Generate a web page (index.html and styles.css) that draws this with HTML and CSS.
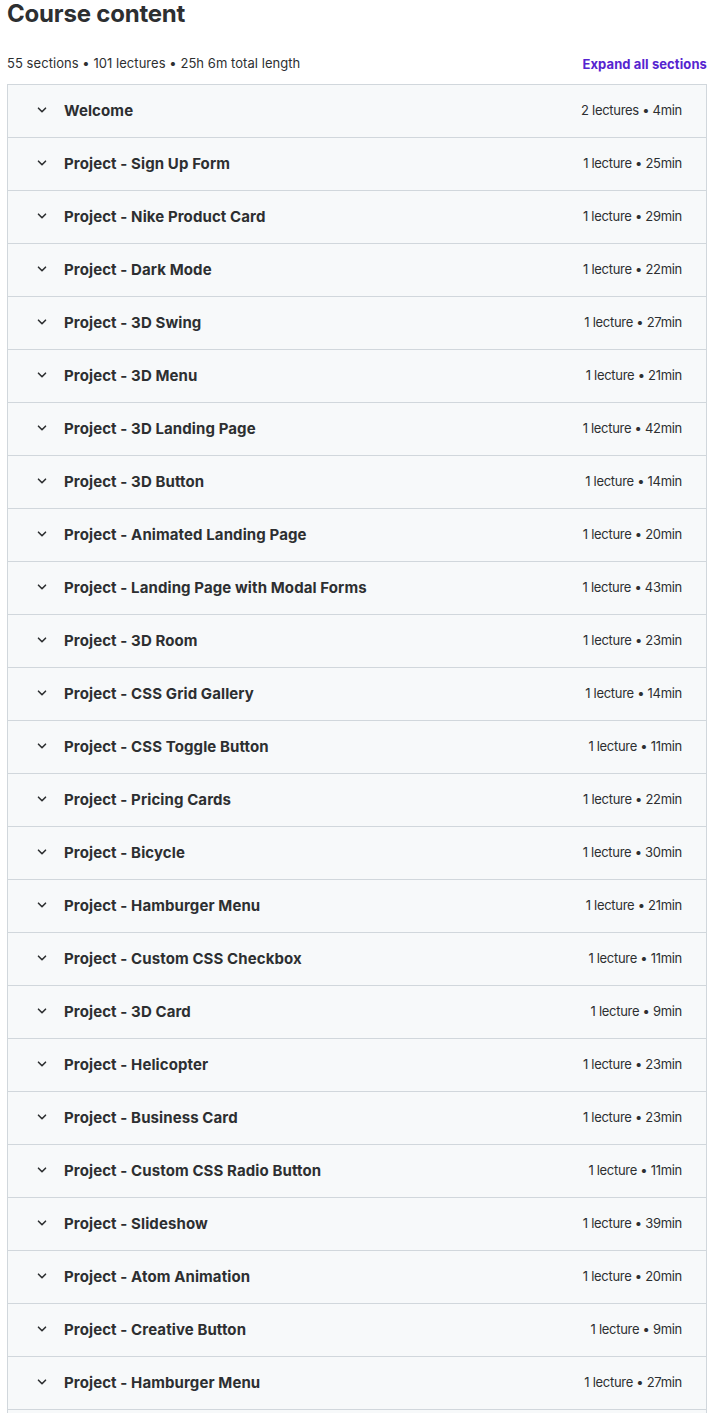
FILE: index.html
```html
<!DOCTYPE html>
<html>
<head>
<meta charset="utf-8">
<link rel="stylesheet" href="styles.css">
</head>
<body>
<div class="page">
  <h2 class="title">Course content</h2>
  <div class="meta-row">
    <span class="meta">55 sections • 101 lectures • 25h 6m total length</span>
    <button class="expand">Expand all sections</button>
  </div>
  <div class="sections" id="sections"></div>
</div>
<script src="script.js"></script>
</body>
</html>
```

FILE: script.js
```js
const data = [
  ["Welcome","2 lectures • 4min"],
  ["Project - Sign Up Form","1 lecture • 25min"],
  ["Project - Nike Product Card","1 lecture • 29min"],
  ["Project - Dark Mode","1 lecture • 22min"],
  ["Project - 3D Swing","1 lecture • 27min"],
  ["Project - 3D Menu","1 lecture • 21min"],
  ["Project - 3D Landing Page","1 lecture • 42min"],
  ["Project - 3D Button","1 lecture • 14min"],
  ["Project - Animated Landing Page","1 lecture • 20min"],
  ["Project - Landing Page with Modal Forms","1 lecture • 43min"],
  ["Project - 3D Room","1 lecture • 23min"],
  ["Project - CSS Grid Gallery","1 lecture • 14min"],
  ["Project - CSS Toggle Button","1 lecture • 11min"],
  ["Project - Pricing Cards","1 lecture • 22min"],
  ["Project - Bicycle","1 lecture • 30min"],
  ["Project - Hamburger Menu","1 lecture • 21min"],
  ["Project - Custom CSS Checkbox","1 lecture • 11min"],
  ["Project - 3D Card","1 lecture • 9min"],
  ["Project - Helicopter","1 lecture • 23min"],
  ["Project - Business Card","1 lecture • 23min"],
  ["Project - Custom CSS Radio Button","1 lecture • 11min"],
  ["Project - Slideshow","1 lecture • 39min"],
  ["Project - Atom Animation","1 lecture • 20min"],
  ["Project - Creative Button","1 lecture • 9min"],
  ["Project - Hamburger Menu","1 lecture • 27min"],
  ["Project - Product Card","1 lecture • 18min"]
];
const wrap = document.getElementById("sections");
const chev = '<svg class="chev" width="12" height="12" viewBox="0 0 12 12"><path d="M2.5 4.2 L6 7.7 L9.5 4.2" fill="none" stroke="#2d2f31" stroke-width="1.6" stroke-linecap="round" stroke-linejoin="round"/></svg>';
for (const [t, m] of data) {
  const row = document.createElement("div");
  row.className = "row";
  row.innerHTML = chev + '<span class="row-title"></span><span class="row-meta"></span>';
  row.querySelector(".row-title").textContent = t;
  row.querySelector(".row-meta").textContent = m;
  wrap.appendChild(row);
}
```

FILE: styles.css
```css
html, body { margin: 0; padding: 0; background: #fff; }
body { font-family: "Inter", "Noto Sans", sans-serif; color: #2d2f31; }
.page { padding: 0 6px 0 7px; }
.title {
  margin: 0;
  font-size: 24px;
  line-height: 28px;
  font-weight: 700;
  color: #2d2f31;
  letter-spacing: -0.2px;
}
.meta-row {
  display: flex;
  justify-content: space-between;
  align-items: center;
  margin-top: 24px;
  height: 22px;
  margin-bottom: 10px;
}
.meta { font-size: 13px; color: #2d2f31; letter-spacing: 0.05px; }
.expand {
  border: 0; background: none; padding: 0; margin-top: 2px;
  font-family: inherit; font-size: 13px; font-weight: 700; color: #5624d0;
  letter-spacing: 0.1px;
}
.sections {
  border: 1px solid #d1d7dc;
  border-top: 0;
  width: 698px;
}
.row {
  display: flex;
  align-items: center;
  border-top: 1px solid #d1d7dc;
  background: #f7f9fa;
  padding: 0 24px 2px 28px;
  box-sizing: border-box;
  height: 53px;
}
.chev { flex: none; margin-right: 16px; }
.row-title { font-size: 15px; font-weight: 700; flex: 1; color: #2d2f31; letter-spacing: 0.1px; }
.row-meta { font-size: 13px; color: #2d2f31; letter-spacing: -0.3px; }
```
